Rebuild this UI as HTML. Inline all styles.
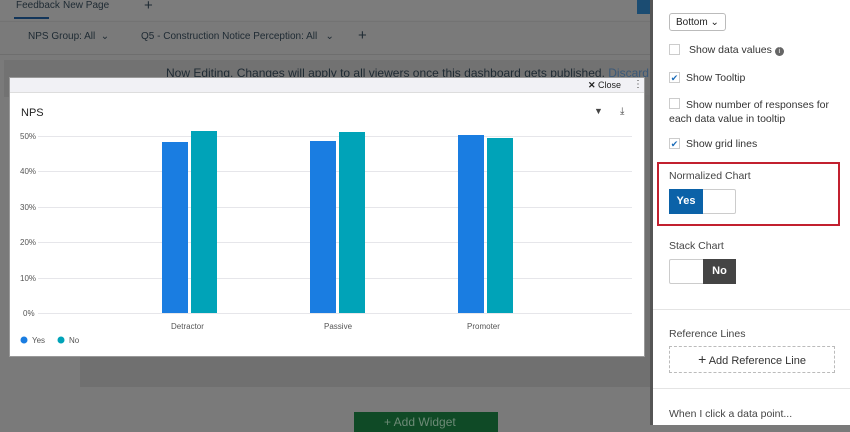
<!DOCTYPE html>
<html><head><style>
*{margin:0;padding:0;box-sizing:border-box}
body{width:850px;height:425px;overflow:hidden;background:#7a7a7a;font-family:"Liberation Sans",sans-serif;position:relative;font-size:11px;color:#222}
.a{position:absolute;white-space:nowrap}
</style></head><body>
<div class="a" style="left:0;top:0;width:652px;height:20px;background:#7c7c7c"></div>
<div class="a" style="left:16px;top:0;color:#1e2a33;font-size:10px">Feedback</div>
<div class="a" style="left:14px;top:17px;width:35px;height:2px;background:#12355a"></div>
<div class="a" style="left:63px;top:0;color:#1e2a33;font-size:10px">New Page</div>
<div class="a" style="left:144px;top:-3px;color:#1e2a33;font-size:15px">+</div>
<div class="a" style="left:637px;top:0;width:15px;height:14px;background:#1b4c72"></div>
<div class="a" style="left:0;top:21px;width:652px;height:34px;background:#7a7a7a;border-top:1px solid #737373;border-bottom:1px solid #6e6e6e"></div>
<div class="a" style="left:28px;top:31px;color:#1e2a33;font-size:10px">NPS Group: All&nbsp;&nbsp;⌄</div>
<div class="a" style="left:141px;top:31px;color:#1e2a33;font-size:10px">Q5 - Construction Notice Perception: All&nbsp;&nbsp;&nbsp;⌄</div>
<div class="a" style="left:358px;top:27px;color:#1e2a33;font-size:15px">+</div>
<div class="a" style="left:4px;top:60px;width:648px;height:37px;background:#727272"></div>
<div class="a" style="left:80px;top:95px;width:572px;height:292px;background:#707070"></div>
<div class="a" style="left:166px;top:66px;color:#1e2a33;font-size:12px">Now Editing. Changes will apply to all viewers once this dashboard gets published. <span style="color:#3a5878">Discard cha</span></div>
<div class="a" style="left:354px;top:412px;width:144px;height:20px;background:#0f4a26;color:#6d8a76;padding:3px 0 0 30px;font-size:12px">+ Add Widget</div>
<!-- modal -->
<div class="a" style="left:9px;top:77px;width:636px;height:280px;background:#fff;border:1px solid #999"></div>
<div class="a" style="left:10px;top:78px;width:634px;height:15px;background:#f1f1f5;border-bottom:1px solid #ddd"></div>
<div class="a" style="left:588px;top:80px;font-size:9px;color:#222"><b>✕</b> Close</div>
<div class="a" style="left:633px;top:79px;font-size:10px;color:#444">⋮</div>
<div class="a" style="left:21px;top:107px;font-size:11px;color:#222">NPS</div>
<div class="a" style="left:594px;top:106px;font-size:9px;color:#444">▼</div>
<div class="a" style="left:620px;top:106px;font-size:10px;color:#444">⤓</div>
<svg class="a" style="left:0;top:0" width="650" height="360">
<g stroke="#e6e6ea" stroke-width="1">
<line x1="38" y1="136.5" x2="632" y2="136.5"/><line x1="38" y1="171.5" x2="632" y2="171.5"/><line x1="38" y1="207.5" x2="632" y2="207.5"/><line x1="38" y1="242.5" x2="632" y2="242.5"/><line x1="38" y1="278.5" x2="632" y2="278.5"/><line x1="38" y1="313.5" x2="632" y2="313.5"/>
</g>
<g font-family="Liberation Sans" font-size="8" fill="#555">
<text x="20" y="139">50%</text><text x="20" y="174">40%</text><text x="20" y="210">30%</text><text x="20" y="245">20%</text><text x="20" y="281">10%</text><text x="23" y="316">0%</text>
<text x="171" y="329">Detractor</text><text x="324" y="329">Passive</text><text x="467" y="329">Promoter</text>
<text x="32" y="343">Yes</text><text x="69" y="343">No</text>
</g>
<rect x="162" y="142" width="26" height="171" fill="#1a7de1"/><rect x="191" y="131" width="26" height="182" fill="#00a3b8"/>
<rect x="310" y="141" width="26" height="172" fill="#1a7de1"/><rect x="339" y="132" width="26" height="181" fill="#00a3b8"/>
<rect x="458" y="135" width="26" height="178" fill="#1a7de1"/><rect x="487" y="138" width="26" height="175" fill="#00a3b8"/>
<circle cx="24" cy="340" r="3.5" fill="#1a7de1"/><circle cx="61" cy="340" r="3.5" fill="#00a3b8"/>
</svg>
<!-- right panel -->
<div class="a" style="left:650px;top:0;width:3px;height:425px;background:#555"></div>
<div class="a" style="left:653px;top:0;width:197px;height:425px;background:#fff"></div>
<div class="a" style="left:669px;top:13px;width:57px;height:18px;border:1px solid #bbb;border-radius:3px;padding:3px 0 0 6px;font-size:10px">Bottom ⌄</div>
<div class="a" style="left:669px;top:44px;width:11px;height:11px;border:1px solid #ccc"></div>
<div class="a" style="left:689px;top:44px;font-size:10.5px;color:#333">Show data values <span style="display:inline-block;width:9px;height:9px;border-radius:50%;background:#666;color:#fff;font-size:7px;text-align:center;line-height:9px">i</span></div>
<div class="a" style="left:669px;top:72px;width:11px;height:11px;border:1px solid #ccc;color:#1a6bb8;font-size:9px;line-height:10px;text-align:center">✔</div>
<div class="a" style="left:686px;top:72px;font-size:10.5px;color:#333">Show Tooltip</div>
<div class="a" style="left:669px;top:98px;width:11px;height:11px;border:1px solid #ccc"></div>
<div class="a" style="left:669px;top:98px;width:170px;font-size:10.5px;color:#333;line-height:14px;text-indent:17px;white-space:normal">Show number of responses for each data value in tooltip</div>
<div class="a" style="left:669px;top:138px;width:11px;height:11px;border:1px solid #ccc;color:#1a6bb8;font-size:9px;line-height:10px;text-align:center">✔</div>
<div class="a" style="left:686px;top:138px;font-size:10.5px;color:#333">Show grid lines</div>
<div class="a" style="left:657px;top:162px;width:183px;height:64px;border:2px solid #c2202f"></div>
<div class="a" style="left:669px;top:170px;font-size:10.5px;color:#444">Normalized Chart</div>
<div class="a" style="left:669px;top:189px;width:67px;height:25px;border:1px solid #ccc;border-radius:2px"></div>
<div class="a" style="left:669px;top:189px;width:34px;height:25px;background:#0b62a8;color:#fff;font-weight:bold;font-size:11px;text-align:center;line-height:25px">Yes</div>
<div class="a" style="left:669px;top:240px;font-size:10.5px;color:#444">Stack Chart</div>
<div class="a" style="left:669px;top:259px;width:67px;height:25px;border:1px solid #ccc;border-radius:2px"></div>
<div class="a" style="left:703px;top:259px;width:33px;height:25px;background:#444;color:#fff;font-weight:bold;font-size:11px;text-align:center;line-height:25px">No</div>
<div class="a" style="left:653px;top:309px;width:197px;height:1px;background:#e4e4e4"></div>
<div class="a" style="left:669px;top:328px;font-size:10.5px;color:#444">Reference Lines</div>
<div class="a" style="left:669px;top:346px;width:166px;height:27px;border:1px dashed #bbb;text-align:center;line-height:25px;font-size:11px;color:#333"><span style="font-size:14px">+</span> Add Reference Line</div>
<div class="a" style="left:653px;top:388px;width:197px;height:1px;background:#e4e4e4"></div>
<div class="a" style="left:669px;top:408px;font-size:10.5px;color:#444">When I click a data point...</div>
</body></html>
